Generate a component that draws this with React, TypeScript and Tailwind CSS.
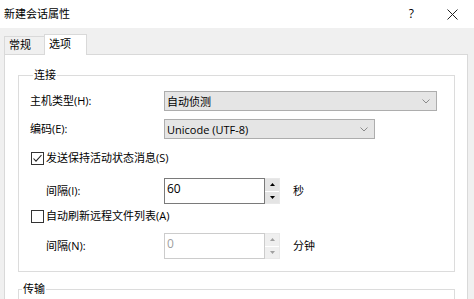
import React from 'react';

function Chevron() {
  return (
    <svg width="8" height="5" viewBox="0 0 8 5" className="shrink-0">
      <path d="M0.5 0.5 L4 4 L7.5 0.5" fill="none" stroke="#8a8a8a" strokeWidth="1" />
    </svg>
  );
}

function Combo({ value, width }: { value: string; width: string }) {
  return (
    <div className={`${width} h-[20px] bg-[#e5e5e5] border border-[#adadad] flex items-center pl-[2px] pr-[6px]`}>
      <span className="flex-1 leading-none">{value}</span>
      <Chevron />
    </div>
  );
}

function Check({ checked }: { checked: boolean }) {
  return (
    <div className="w-[13px] h-[13px] border border-[#333333] bg-white flex items-center justify-center shrink-0">
      {checked && (
        <svg width="11" height="11" viewBox="0 0 11 11">
          <path d="M1.5 5.5 L4 8.2 L9.5 2" fill="none" stroke="#222222" strokeWidth="1.1" />
        </svg>
      )}
    </div>
  );
}

function Arrow({ up, color }: { up: boolean; color: string }) {
  return (
    <svg width="5" height="3" viewBox="0 0 5 3">
      <path d={up ? 'M0 3 L2.5 0 L5 3 Z' : 'M0 0 L2.5 3 L5 0 Z'} fill={color} />
    </svg>
  );
}

function Spin({ value, disabled }: { value: string; disabled?: boolean }) {
  const arrow = disabled ? '#a0a0a0' : '#000000';
  return (
    <div className="flex h-[26px]">
      <div
        className={`w-[101px] h-full border bg-white pl-[2px] pt-[2px] leading-[16px] text-[12px] ${
          disabled ? 'border-[#cccccc] text-[#a0a0a0]' : 'border-[#7a7a7a] text-black'
        }`}
      >
        {value}
      </div>
      <div className="w-[15px] h-full flex flex-col gap-[1px] bg-white border-y border-r border-[#e8e8e8]">
        <div className={`flex-1 flex items-center justify-center ${disabled ? 'bg-[#efefef]' : 'bg-[#e4e4e4]'}`}>
          <Arrow up color={arrow} />
        </div>
        <div className={`flex-1 flex items-center justify-center ${disabled ? 'bg-[#efefef]' : 'bg-[#e4e4e4]'}`}>
          <Arrow up={false} color={arrow} />
        </div>
      </div>
    </div>
  );
}

export default function App() {
  return (
    <div className="w-[474px] h-[299px] overflow-hidden bg-[#f0f0f0] text-[11px] text-black flex flex-col font-['Open_Sans','Noto_Sans_CJK_SC',sans-serif]">
      {/* Title bar */}
      <div className="h-[28px] shrink-0 bg-white flex items-center">
        <span className="pl-[4px] text-[11px]">新建会话属性</span>
        <span className="ml-auto text-[12px] leading-none">?</span>
        <svg width="11" height="11" viewBox="0 0 11 11" className="ml-[33px] mr-[16px]">
          <path d="M0.5 0.5 L10.5 10.5 M10.5 0.5 L0.5 10.5" stroke="#222222" strokeWidth="1" />
        </svg>
      </div>

      {/* Tabs */}
      <div className="h-[26px] shrink-0 flex items-end pl-[4px]">
        <div className="w-[40px] h-[18px] border-t border-l border-[#d9d9d9] bg-[#f0f0f0] pl-[4px] leading-[16px]">
          常规
        </div>
        <div className="relative z-10 -mb-px w-[43px] h-[21px] border-t border-x border-[#d9d9d9] bg-white pl-[4px] leading-[18px]">
          选项
        </div>
      </div>

      {/* Tab pane */}
      <div className="ml-[4px] w-[464px] flex-1 bg-white border border-[#d9d9d9] pl-[13px] pt-[12px]">
        <fieldset className="w-[437px] border border-[#dcdcdc] pl-[11px] pb-[12px]">
          <legend className="ml-[3px] px-[1px] leading-[16px]">连接</legend>

          <div className="mt-[8px] h-[20px] flex items-center">
            <span className="w-[134px]">主机类型(H):</span>
            <Combo value="自动侦测" width="w-[273px]" />
          </div>

          <div className="mt-[8px] h-[20px] flex items-center">
            <span className="w-[134px]">编码(E):</span>
            <Combo value="Unicode (UTF-8)" width="w-[211px]" />
          </div>

          <div className="mt-[9px] h-[20px] flex items-center gap-[2px] pl-[1px]">
            <Check checked />
            <span>发送保持活动状态消息(S)</span>
          </div>

          <div className="mt-[10px] flex items-center">
            <span className="w-[134px] pl-[16px]">间隔(I):</span>
            <Spin value="60" />
            <span className="ml-[13px]">秒</span>
          </div>

          <div className="mt-[2px] h-[20px] flex items-center gap-[2px] pl-[1px]">
            <Check checked={false} />
            <span>自动刷新远程文件列表(A)</span>
          </div>

          <div className="mt-[7px] flex items-center">
            <span className="w-[134px] pl-[16px]">间隔(N):</span>
            <Spin value="0" disabled />
            <span className="ml-[13px]">分钟</span>
          </div>
        </fieldset>

        <fieldset className="mt-[9px] w-[437px] h-[60px] border border-[#dcdcdc]">
          <legend className="ml-[3px] px-[1px] leading-[16px]">传输</legend>
        </fieldset>
      </div>
    </div>
  );
}
